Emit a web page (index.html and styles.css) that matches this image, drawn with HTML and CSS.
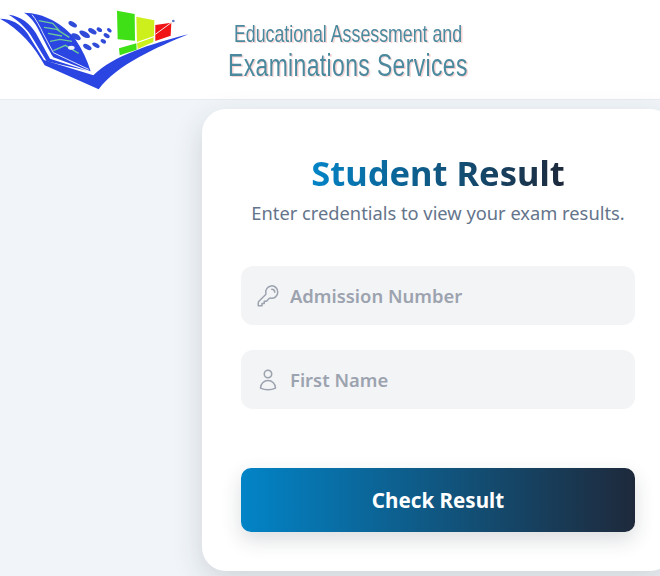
FILE: index.html
```html
<!DOCTYPE html>
<html lang="en">
<head>
    <meta charset="UTF-8">
    <meta name="viewport" content="width=device-width, initial-scale=1.0">
    <title>Student Result</title>
    <link rel="stylesheet" href="styles.css">
</head>
<body>
    <header class="site-header">
        <svg class="logo" viewBox="0 0 660 330" aria-hidden="true">
            <!-- book and check mark -->
            <path fill="#2a45e2" d="M0 56 C35 56 62 72 82 100 L132 180 L280 226 C340 168 450 132 565 103 C470 142 350 195 296 268 L134 196 C105 142 60 88 0 56Z"/>
            <path fill="#2a45e2" d="M26 44 C62 48 92 72 108 100 L150 176 L262 212 L140 184 L92 105 C76 80 52 60 26 44Z"/>
            <path fill="#2a45e2" d="M72 38 C130 38 192 72 226 118 C248 150 262 182 272 214 L160 172 C146 150 128 112 114 86 C106 70 92 50 72 38Z"/>
            <path fill="none" stroke="#fff" stroke-width="2.5" d="M96 44 C108 58 120 80 130 102 L160 158 L266 208"/>
            <path fill="none" stroke="#6cc89a" stroke-width="4" d="M116 62 L158 70 L178 92 M132 82 L170 88 L208 112 M144 100 L186 108 M150 124 L180 118 L216 124 M160 152 L196 136 L236 160"/>
            <ellipse cx="214" cy="143" rx="10" ry="6" fill="#eef1ff"/>
            <!-- pixels coming off the page -->
            <g fill="#2f4bd8">
                <ellipse cx="218" cy="73" rx="14" ry="7" transform="rotate(30 218 73)"/>
                <ellipse cx="254" cy="103" rx="18" ry="8" transform="rotate(30 254 103)"/>
                <ellipse cx="277" cy="94" rx="14" ry="7" transform="rotate(30 277 94)"/>
                <ellipse cx="298" cy="89" rx="9" ry="6" transform="rotate(30 298 89)"/>
                <ellipse cx="328" cy="91" rx="8" ry="5" transform="rotate(40 328 91)"/>
                <ellipse cx="320" cy="107" rx="10" ry="6" transform="rotate(30 320 107)"/>
                <ellipse cx="310" cy="124" rx="9" ry="6" transform="rotate(30 310 124)"/>
                <ellipse cx="288" cy="136" rx="12" ry="6" transform="rotate(30 288 136)"/>
                <ellipse cx="262" cy="141" rx="14" ry="7" transform="rotate(30 262 141)"/>
                <ellipse cx="228" cy="110" rx="16" ry="8" transform="rotate(30 228 110)"/>
            </g>
            <!-- window panels -->
            <path fill="#3fe016" d="M351 32 L404 42 L405 122 L353 118Z"/>
            <path fill="#3fe016" d="M357 145 L409 130 L410 149 L359 166Z"/>
            <path fill="#cdf01c" d="M409 50 L463 61 L462 108 L411 126Z"/>
            <path fill="#cdf01c" d="M411 130 L461 112 L460 126 L413 147Z"/>
            <path fill="#f01414" d="M466 75 L514 68 L512 107 L466 123Z"/>
            <path fill="none" stroke="#f4e9e9" stroke-width="3" d="M466 103 L522 62"/>
            <circle cx="520" cy="63" r="4" fill="#5d78c8"/>
        </svg>
        <div class="brand">
            <span class="brand-top">Educational Assessment and</span>
            <span class="brand-bottom">Examinations Services</span>
        </div>
    </header>

    <main class="page">
        <section class="result-card">
            <h1>Student Result</h1>
            <p class="subtitle">Enter credentials to view your exam results.</p>

            <form class="result-form">
                <label class="field">
                    <svg class="field-icon" viewBox="0 0 24 24" aria-hidden="true">
                        <path d="M15.75 5.25a3 3 0 0 1 3 3m3 0a6 6 0 0 1-7.03 5.91c-.56-.1-1.16.02-1.56.43L10.5 17.25H8.25V19.5H6v2.25H2.25v-2.82c0-.6.24-1.17.66-1.6l6.57-6.57c.4-.4.53-1 .43-1.56A6 6 0 1 1 21.75 8.25Z"/>
                    </svg>
                    <input type="text" placeholder="Admission Number">
                </label>
                <label class="field">
                    <svg class="field-icon" viewBox="0 0 24 24" aria-hidden="true">
                        <path d="M15.75 6a3.75 3.75 0 1 1-7.5 0 3.75 3.75 0 0 1 7.5 0ZM4.5 20.12a7.5 7.5 0 0 1 15 0A17.93 17.93 0 0 1 12 21.75c-2.68 0-5.22-.58-7.5-1.63Z"/>
                    </svg>
                    <input type="text" placeholder="First Name">
                </label>
                <button type="button" class="check-button">Check Result</button>
            </form>
        </section>
    </main>
</body>
</html>
```

FILE: styles.css
```css
* {
    margin: 0;
    padding: 0;
    box-sizing: border-box;
}

html, body {
    height: 100%;
    overflow: hidden;
}

body {
    font-family: 'Noto Sans', 'Open Sans', sans-serif;
    background: #f1f5f9;
    color: #1e293b;
}

.site-header {
    display: flex;
    align-items: flex-start;
    height: 100px;
    background: #fff;
    border-bottom: 1px solid #e8ecf2;
}

.logo {
    display: block;
    flex: none;
    width: 220px;
    height: 110px;
    margin-bottom: -10px;
}

.brand {
    display: flex;
    flex-direction: column;
    align-items: flex-start;
    padding: 20px 0 0 8px;
    color: #4b8a9e;
    font-family: 'Liberation Sans', sans-serif;
    text-shadow: 2px 1px 0 #f8d6d6;
}

.brand-top,
.brand-bottom {
    transform: scaleX(0.74);
    transform-origin: left center;
    white-space: nowrap;
}

.brand-top {
    margin-left: 6px;
    font-size: 24px;
    line-height: 28px;
}

.brand-bottom {
    font-size: 31px;
    line-height: 35px;
    letter-spacing: 0.5px;
}

.page {
    padding: 9px 0 0 202px;
}

.result-card {
    width: 472px;
    height: 462px;
    padding: 39px;
    background: #fff;
    border-radius: 24px;
    box-shadow: 0 10px 30px rgba(30, 41, 59, 0.16);
    text-align: center;
}

h1 {
    width: fit-content;
    margin: 0 auto;
    font-size: 34.5px;
    font-weight: 700;
    line-height: 50px;
    background: linear-gradient(90deg, #0284c7, #1e293b);
    -webkit-background-clip: text;
    background-clip: text;
    color: transparent;
}

.subtitle {
    margin: 2px -10px 0;
    font-size: 18.3px;
    line-height: 26px;
    color: #64748b;
    white-space: nowrap;
}

.result-form {
    margin-top: 40px;
}

.field {
    display: flex;
    align-items: center;
    gap: 10px;
    height: 59px;
    margin-bottom: 25px;
    padding-left: 15px;
    background: #f3f4f6;
    border-radius: 12px;
}

.field-icon {
    flex: none;
    width: 24px;
    height: 24px;
    fill: none;
    stroke: #9ca3af;
    stroke-width: 1.5;
    stroke-linecap: round;
    stroke-linejoin: round;
}

.field input {
    flex: 1;
    min-width: 0;
    border: none;
    outline: none;
    background: transparent;
    font-family: inherit;
    font-size: 18.4px;
    font-weight: 600;
    color: #374151;
}

.field input::placeholder {
    color: #9ca3af;
    opacity: 1;
}

.check-button {
    display: block;
    width: 100%;
    height: 64px;
    margin-top: 59px;
    border: none;
    border-radius: 10px;
    background: linear-gradient(90deg, #0284c7, #1e293b);
    box-shadow: 0 8px 20px rgba(30, 41, 59, 0.16);
    color: #fff;
    font-family: inherit;
    font-size: 20.6px;
    font-weight: 700;
    cursor: pointer;
}
```
